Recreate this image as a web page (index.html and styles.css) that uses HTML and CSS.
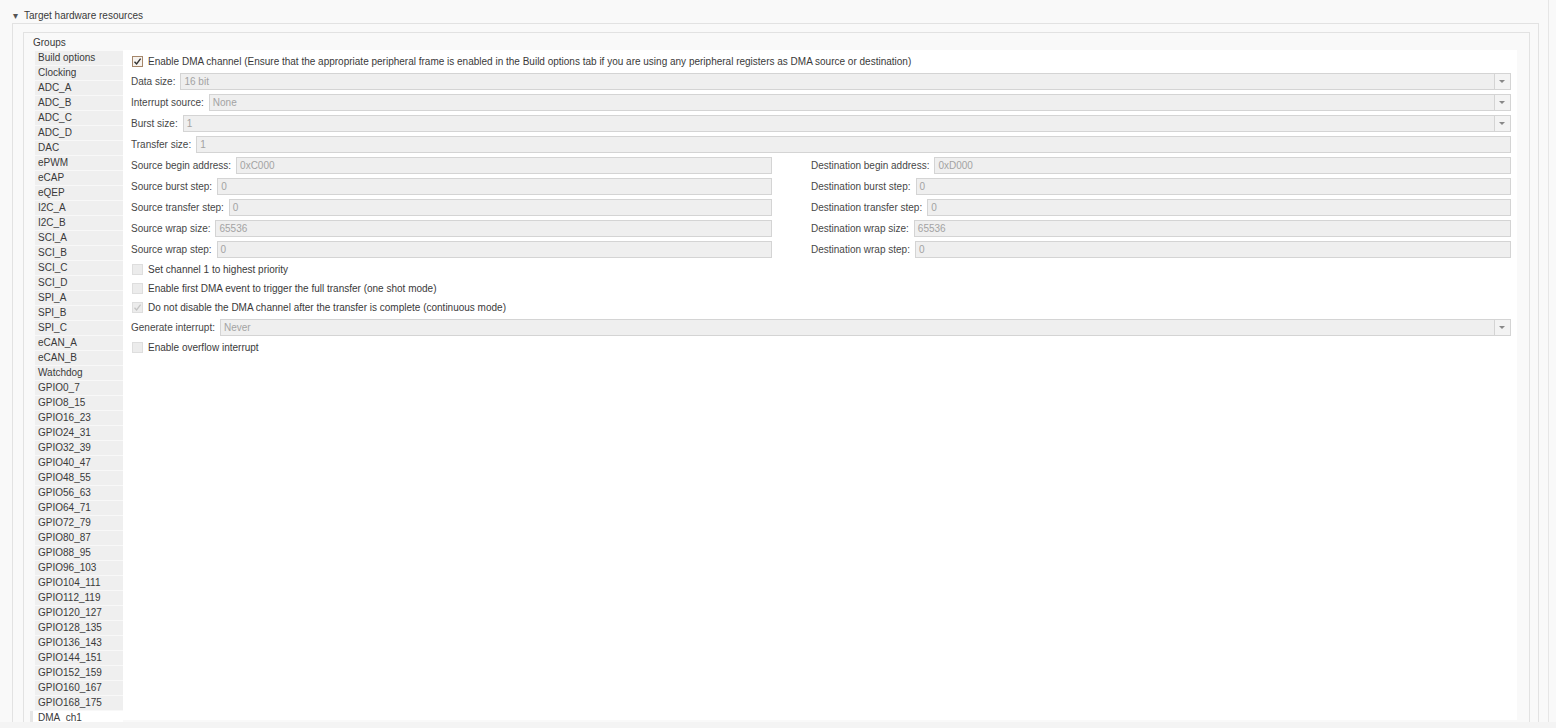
FILE: index.html
```html
<!DOCTYPE html>
<html lang="en">
<head>
<meta charset="utf-8">
<title>Target hardware resources</title>
<link rel="stylesheet" href="styles.css">
</head>
<body>
<div class="page">
  <div class="section-head"><span class="caret">&#9662;</span>Target hardware resources</div>
  <div class="fieldset">
    <div class="inner">
      <div class="groups-title">Groups</div>
      <div class="groups-body">
        <ul class="group-list">
          <li>Build options</li>
          <li>Clocking</li>
          <li>ADC_A</li>
          <li>ADC_B</li>
          <li>ADC_C</li>
          <li>ADC_D</li>
          <li>DAC</li>
          <li>ePWM</li>
          <li>eCAP</li>
          <li>eQEP</li>
          <li>I2C_A</li>
          <li>I2C_B</li>
          <li>SCI_A</li>
          <li>SCI_B</li>
          <li>SCI_C</li>
          <li>SCI_D</li>
          <li>SPI_A</li>
          <li>SPI_B</li>
          <li>SPI_C</li>
          <li>eCAN_A</li>
          <li>eCAN_B</li>
          <li>Watchdog</li>
          <li>GPIO0_7</li>
          <li>GPIO8_15</li>
          <li>GPIO16_23</li>
          <li>GPIO24_31</li>
          <li>GPIO32_39</li>
          <li>GPIO40_47</li>
          <li>GPIO48_55</li>
          <li>GPIO56_63</li>
          <li>GPIO64_71</li>
          <li>GPIO72_79</li>
          <li>GPIO80_87</li>
          <li>GPIO88_95</li>
          <li>GPIO96_103</li>
          <li>GPIO104_111</li>
          <li>GPIO112_119</li>
          <li>GPIO120_127</li>
          <li>GPIO128_135</li>
          <li>GPIO136_143</li>
          <li>GPIO144_151</li>
          <li>GPIO152_159</li>
          <li>GPIO160_167</li>
          <li>GPIO168_175</li>
          <li class="active">DMA_ch1</li>
        </ul>
        <div class="panel">
          <div class="check-row">
            <span class="box checked"><svg viewBox="0 0 11 11" width="11" height="11"><path d="M2.5 5.8 L4.6 8 L8.6 2.6" fill="none" stroke="#333" stroke-width="1.4"/></svg></span>
            <span>Enable DMA channel (Ensure that the appropriate peripheral frame is enabled in the Build options tab if you are using any peripheral registers as DMA source or destination)</span>
          </div>
          <div class="field-row">
            <span class="label">Data size:</span>
            <div class="select"><span class="value">16 bit</span><span class="arrow"></span></div>
          </div>
          <div class="field-row">
            <span class="label">Interrupt source:</span>
            <div class="select"><span class="value">None</span><span class="arrow"></span></div>
          </div>
          <div class="field-row">
            <span class="label">Burst size:</span>
            <div class="select"><span class="value">1</span><span class="arrow"></span></div>
          </div>
          <div class="field-row">
            <span class="label">Transfer size:</span>
            <div class="input">1</div>
          </div>
          <div class="pair-row">
            <div class="col-left field-row">
              <span class="label">Source begin address:</span>
              <div class="input">0xC000</div>
            </div>
            <div class="col-right field-row">
              <span class="label">Destination begin address:</span>
              <div class="input">0xD000</div>
            </div>
          </div>
          <div class="pair-row">
            <div class="col-left field-row">
              <span class="label">Source burst step:</span>
              <div class="input">0</div>
            </div>
            <div class="col-right field-row">
              <span class="label">Destination burst step:</span>
              <div class="input">0</div>
            </div>
          </div>
          <div class="pair-row">
            <div class="col-left field-row">
              <span class="label">Source transfer step:</span>
              <div class="input">0</div>
            </div>
            <div class="col-right field-row">
              <span class="label">Destination transfer step:</span>
              <div class="input">0</div>
            </div>
          </div>
          <div class="pair-row">
            <div class="col-left field-row">
              <span class="label">Source wrap size:</span>
              <div class="input">65536</div>
            </div>
            <div class="col-right field-row">
              <span class="label">Destination wrap size:</span>
              <div class="input">65536</div>
            </div>
          </div>
          <div class="pair-row">
            <div class="col-left field-row">
              <span class="label">Source wrap step:</span>
              <div class="input">0</div>
            </div>
            <div class="col-right field-row">
              <span class="label">Destination wrap step:</span>
              <div class="input">0</div>
            </div>
          </div>
          <div class="check-row">
            <span class="box disabled"></span>
            <span>Set channel 1 to highest priority</span>
          </div>
          <div class="check-row">
            <span class="box disabled"></span>
            <span>Enable first DMA event to trigger the full transfer (one shot mode)</span>
          </div>
          <div class="check-row">
            <span class="box disabled"><svg viewBox="0 0 11 11" width="11" height="11"><path d="M2.5 5.8 L4.6 8 L8.6 2.6" fill="none" stroke="#c4c4c4" stroke-width="1.3"/></svg></span>
            <span>Do not disable the DMA channel after the transfer is complete (continuous mode)</span>
          </div>
          <div class="field-row">
            <span class="label">Generate interrupt:</span>
            <div class="select"><span class="value">Never</span><span class="arrow"></span></div>
          </div>
          <div class="check-row">
            <span class="box disabled"></span>
            <span>Enable overflow interrupt</span>
          </div>
        </div>
      </div>
    </div>
  </div>
</div>
<div class="bottom-band"></div>
</body>
</html>
```

FILE: styles.css
```css
* {
  box-sizing: border-box;
}

html, body {
  margin: 0;
  padding: 0;
  height: 100%;
  overflow: hidden;
}

body {
  background: #f9f9f9;
  font-family: "Liberation Sans", Arial, sans-serif;
  font-size: 10px;
  color: #3a3a3a;
  position: relative;
}

.page {
  width: 1549px;
  height: 728px;
  padding-left: 12px;
  border-right: 1px solid #e6e6e6;
}

.section-head {
  height: 23px;
  padding: 10px 0 0 1px;
  line-height: 12px;
  color: #3a3a3a;
}

.caret {
  display: inline-block;
  font-size: 10px;
  width: 11px;
  color: #555;
}

.fieldset {
  width: 1527px;
  height: 705px;
  border: 1px solid #e2e2e2;
  border-bottom: none;
  padding: 8px 0 0 10px;
}

.inner {
  width: 1507px;
  height: 100%;
  border: 1px solid #e2e2e2;
  border-bottom: none;
  padding-left: 9px;
}

.groups-title {
  height: 17px;
  padding-top: 4px;
  line-height: 12px;
  color: #3a3a3a;
}

.groups-body {
  display: flex;
  align-items: flex-start;
}

.group-list {
  list-style: none;
  margin: 1px 0 0 2px;
  padding: 0;
  width: 88px;
  flex: none;
}

.group-list li {
  height: 15px;
  line-height: 14px;
  padding-left: 3px;
  background: #efefef;
  border-bottom: 1px solid #f8f8f8;
  color: #3a3a3a;
  white-space: nowrap;
}

.group-list li.active {
  background: #fff;
  margin-left: -5px;
  padding-left: 5px;
  border-left: 3px solid #e6e6e6;
  border-bottom: none;
  width: 93px;
}

.panel {
  width: 1394px;
  height: 670px;
  background: #fff;
  padding: 2px 6px 0 8px;
}

.check-row {
  height: 19px;
  display: flex;
  align-items: center;
  gap: 5px;
  padding-left: 1px;
  white-space: nowrap;
}

.box {
  width: 11px;
  height: 11px;
  flex: none;
  border: 1px solid #c9c9c9;
  background: #f1f1f1;
  position: relative;
}

.box svg {
  position: absolute;
  left: -1px;
  top: -1px;
}

.box.checked {
  border-color: #a5866a;
  background: #f7f3ef;
}

.box.disabled {
  border-color: #dedede;
  background: #ececec;
}

.field-row {
  height: 21px;
  display: flex;
  align-items: center;
  gap: 5px;
  white-space: nowrap;
}

.label {
  flex: none;
  color: #474747;
}

.input,
.select {
  flex: 1;
  height: 17px;
  border: 1px solid #d4d4d4;
  background: #efefef;
  color: #a3a3a3;
  line-height: 15px;
  padding-left: 3px;
}

.select {
  display: flex;
  padding-left: 0;
}

.select .value {
  flex: 1;
  padding-left: 3px;
}

.select .arrow {
  width: 16px;
  flex: none;
  border-left: 1px solid #d4d4d4;
  background: #f3f3f3;
  position: relative;
}

.select .arrow::after {
  content: "";
  position: absolute;
  left: 4px;
  top: 6px;
  border-left: 3px solid transparent;
  border-right: 3px solid transparent;
  border-top: 3px solid #888;
}

.pair-row {
  display: flex;
  gap: 39px;
}

.col-left {
  width: 641px;
  flex: none;
}

.col-right {
  flex: 1;
}

.bottom-band {
  position: absolute;
  left: 0;
  right: 0;
  bottom: 0;
  height: 6px;
  background: #f4f4f4;
}
```
